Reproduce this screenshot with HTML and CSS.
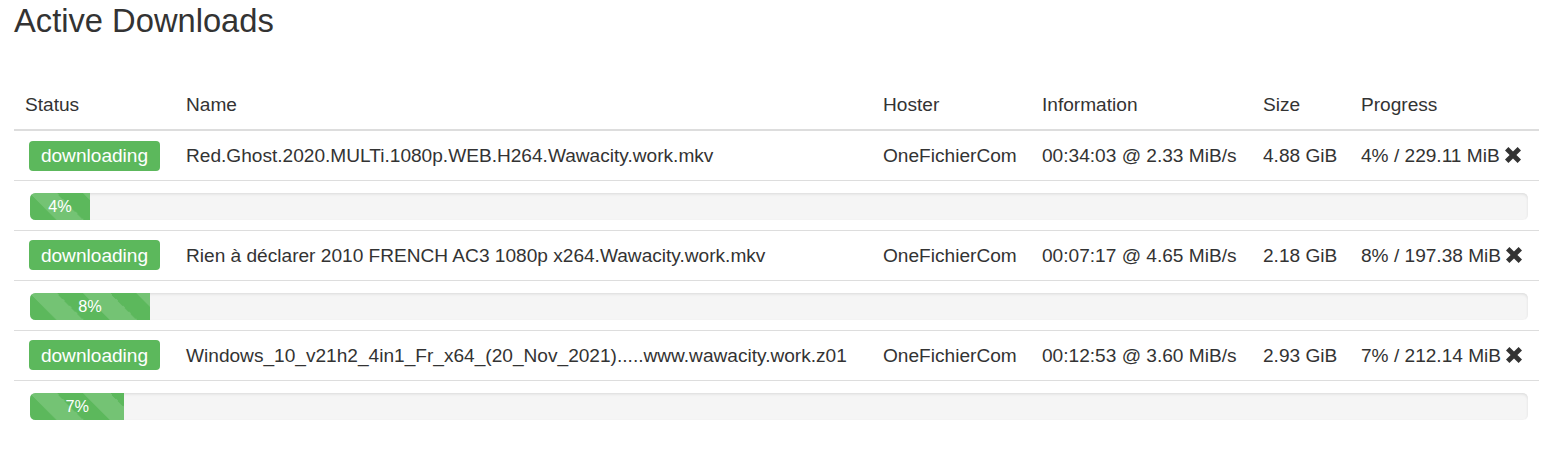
FILE: index.html
```html
<!DOCTYPE html>
<html>
<head>
    <link rel="stylesheet" href="styles.css">
</head>
<body>
    <h3 class="title">Active Downloads</h3>

    <table class="downloads">
        <thead>
            <tr>
                <th class="col-status">Status</th>
                <th class="col-name">Name</th>
                <th class="col-hoster">Hoster</th>
                <th class="col-info">Information</th>
                <th class="col-size">Size</th>
                <th class="col-progress">Progress</th>
            </tr>
        </thead>
        <tbody>
            <tr>
                <td class="status"><span class="label">downloading</span></td>
                <td>Red.Ghost.2020.MULTi.1080p.WEB.H264.Wawacity.work.mkv</td>
                <td>OneFichierCom</td>
                <td>00:34:03 @ 2.33 MiB/s</td>
                <td>4.88 GiB</td>
                <td>4% / 229.11 MiB <svg class="remove" viewBox="0 0 16 16"><path d="M3.4 0 L8 4.6 L12.6 0 L16 3.4 L11.4 8 L16 12.6 L12.6 16 L8 11.4 L3.4 16 L0 12.6 L4.6 8 L0 3.4 Z"/></svg></td>
            </tr>
            <tr>
                <td class="progress-cell" colspan="6">
                    <div class="progress"><div class="bar" style="width: 4%">4%</div></div>
                </td>
            </tr>
            <tr>
                <td class="status"><span class="label">downloading</span></td>
                <td>Rien à déclarer 2010 FRENCH AC3 1080p x264.Wawacity.work.mkv</td>
                <td>OneFichierCom</td>
                <td>00:07:17 @ 4.65 MiB/s</td>
                <td>2.18 GiB</td>
                <td>8% / 197.38 MiB <svg class="remove" viewBox="0 0 16 16"><path d="M3.4 0 L8 4.6 L12.6 0 L16 3.4 L11.4 8 L16 12.6 L12.6 16 L8 11.4 L3.4 16 L0 12.6 L4.6 8 L0 3.4 Z"/></svg></td>
            </tr>
            <tr>
                <td class="progress-cell" colspan="6">
                    <div class="progress"><div class="bar" style="width: 8%">8%</div></div>
                </td>
            </tr>
            <tr>
                <td class="status"><span class="label">downloading</span></td>
                <td>Windows_10_v21h2_4in1_Fr_x64_(20_Nov_2021).....www.wawacity.work.z01</td>
                <td>OneFichierCom</td>
                <td>00:12:53 @ 3.60 MiB/s</td>
                <td>2.93 GiB</td>
                <td>7% / 212.14 MiB <svg class="remove" viewBox="0 0 16 16"><path d="M3.4 0 L8 4.6 L12.6 0 L16 3.4 L11.4 8 L16 12.6 L12.6 16 L8 11.4 L3.4 16 L0 12.6 L4.6 8 L0 3.4 Z"/></svg></td>
            </tr>
            <tr>
                <td class="progress-cell" colspan="6">
                    <div class="progress"><div class="bar" style="width: 6.3%">7%</div></div>
                </td>
            </tr>
        </tbody>
    </table>
</body>
</html>
```

FILE: styles.css
```css
body {
    margin: 0;
    font-family: "Liberation Sans", Arial, sans-serif;
    font-size: 19.1px;
    line-height: 27px;
    color: #333;
    background: #fff;
}
.title {
    margin: 3px 0 0 14px;
    font-size: 32.7px;
    font-weight: 500;
    line-height: 36px;
}
.downloads {
    margin: 41px 0 0 14px;
    width: 1525px;
    border-collapse: collapse;
    table-layout: fixed;
}
.downloads th,
.downloads td {
    padding: 11px;
    text-align: left;
    vertical-align: top;
    white-space: nowrap;
}
.downloads th {
    font-weight: normal;
    border-bottom: 2px solid #ddd;
}
.downloads td {
    border-top: 1px solid #ddd;
}
.col-status { width: 139px; }
.col-name { width: 675px; }
.col-hoster { width: 137px; }
.col-info { width: 199px; }
.col-size { width: 76px; }
.col-progress { width: 167px; }
.downloads td.status {
    text-align: center;
}
.label {
    display: inline-block;
    vertical-align: top;
    margin: -1.5px 0;
    padding: 1.5px 11.5px;
    background: #5cb85c;
    color: #fff;
    border-radius: 4px;
    line-height: 27px;
}
.remove {
    width: 16px;
    height: 16px;
    fill: #333;
    vertical-align: -1px;
}
.downloads td.progress-cell {
    padding: 12px 11px 10.33px;
}
.progress {
    margin-left: 5px;
    height: 26.67px;
    background: #f5f5f5;
    border-radius: 5.33px;
    box-shadow: inset 0 1.33px 2.67px rgba(0,0,0,0.1);
    overflow: hidden;
}
.bar {
    height: 100%;
    background-color: #5cb85c;
    background-image: linear-gradient(45deg, rgba(255,255,255,.15) 25%, transparent 25%, transparent 50%, rgba(255,255,255,.15) 50%, rgba(255,255,255,.15) 75%, transparent 75%, transparent);
    background-size: 53.33px 53.33px;
    color: #fff;
    font-size: 16.3px;
    line-height: 26.67px;
    text-align: center;
}
```
